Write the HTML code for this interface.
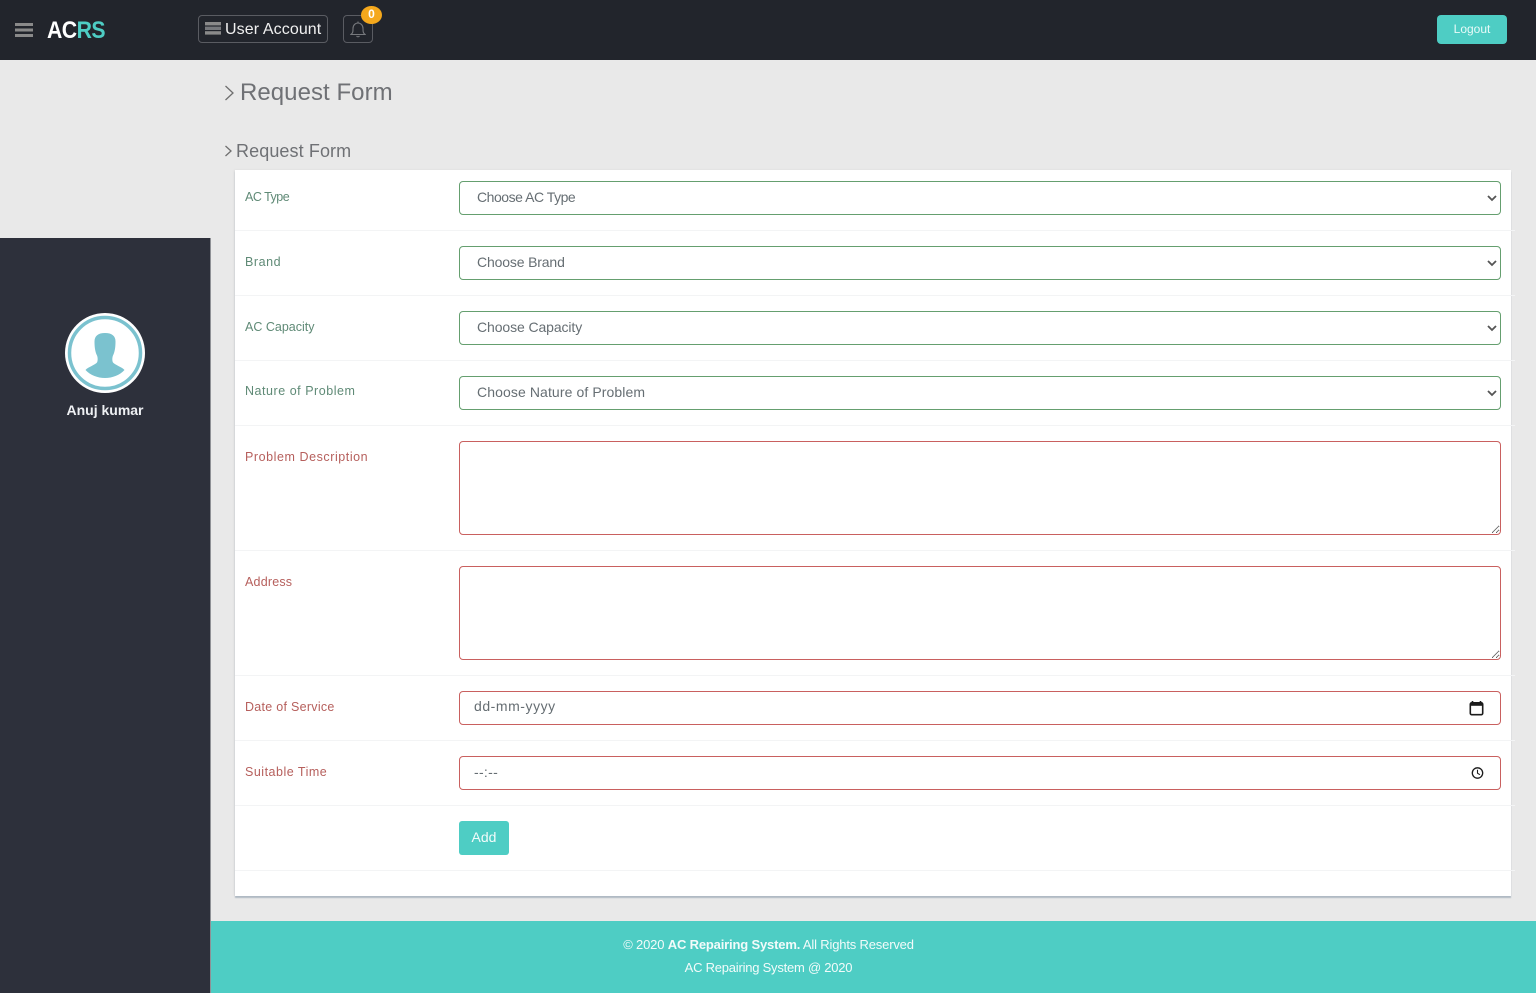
<!DOCTYPE html>
<html lang="en"><head><meta charset="utf-8"><title>Request Form</title>
<style>
*{box-sizing:border-box}
html,body{margin:0;padding:0}
body{width:1536px;height:993px;position:relative;overflow:hidden;background:#e9e9e9;font-family:"Liberation Sans",sans-serif}
.a{position:absolute;white-space:nowrap}
.hdr{left:0;top:0;width:1536px;height:60px;background:#22252c}
.side{left:0;top:238px;width:211px;height:755px;background:#2d303b;border-right:1px solid #8f9196}
.foot{left:211px;top:921px;width:1325px;height:72px;background:#4ecdc4}
.panel{left:235px;top:170px;width:1276px;height:726px;background:#fff;box-shadow:0 2px 1px #b0bac4,-1px 0 2px rgba(0,0,0,.06)}
.hr{left:235px;width:1280px;height:1px;background:#f3f4f5}
.l{left:245px;font-size:12.5px;line-height:16px}
.g{color:#5f8a76}.r{color:#b65f5c}
select,textarea,.in{position:absolute;left:459px;width:1042px;margin:0;border-radius:4px;background:#fff;font-family:"Liberation Sans",sans-serif;color:#666e73;outline:0}
select{height:34px;border:1px solid #659f6f;font-size:14px;padding:0 13px 2px 17px;appearance:none;-webkit-appearance:none}
textarea{height:94px;border:1px solid #c9605f;display:block;resize:vertical}
.in{height:34px;border:1px solid #c9605f;font-size:14px;line-height:30px;padding:0 14px}
.ch{left:1487px}
</style></head><body>
<div class="a hdr"></div>
<svg class="a" style="left:15px;top:23px" width="18" height="14"><rect width="18" height="3" fill="#8a8a8a"/><rect y="5.500" width="18" height="3" fill="#8a8a8a"/><rect y="11" width="18" height="3" fill="#8a8a8a"/></svg>
<div class="a" style="left:47px;top:16px;font-size:24px;line-height:30px;font-weight:700;color:#fff;letter-spacing:-.6px;transform:scaleX(.885);transform-origin:0 0">AC<span style="color:#4ecdc4">RS</span></div>
<div class="a" style="left:198px;top:15px;width:130px;height:28px;border:1px solid #5a5c62;border-radius:4px"></div>
<svg class="a" style="left:205px;top:22px" width="16" height="13"><rect width="16" height="3.400" fill="#8a8a8a"/><rect y="4.600" width="16" height="3.400" fill="#77797d"/><rect y="9.200" width="16" height="3.400" fill="#8a8a8a"/></svg>
<div class="a" style="left:225px;top:21px;font-size:16px;line-height:18px;color:#f0f0f0;letter-spacing:.1px">User Account</div>
<div class="a" style="left:343px;top:15px;width:30px;height:28px;border:1px solid #5a5c62;border-radius:4px"></div>
<svg class="a" style="left:350px;top:21px" width="16" height="17" viewBox="0 0 16 17" fill="none" stroke="#77797d" stroke-width="1.100"><path d="M1 13.500c2-1.500 2-3 2-6 0-3 2-5.500 5-5.500s5 2.500 5 5.500c0 3 0 4.500 2 6z"/><path d="M6.500 15a1.800 1.800 0 0 0 3 0"/><path d="M8 .5v1.500"/></svg>
<div class="a" style="left:361px;top:6px;width:21px;height:18px;border-radius:50%;background:#f5a81c;color:#fff;font-size:12px;font-weight:700;line-height:17px;text-align:center">0</div>
<div class="a" style="left:1437px;top:15px;width:70px;height:29px;background:#4ecdc4;border-radius:4px;color:#e8faf8;font-size:12px;line-height:28px;text-align:center">Logout</div>

<div class="a side"></div>
<svg class="a" style="left:65px;top:313px" width="80" height="80" viewBox="0 0 80 80"><circle cx="40" cy="40" r="40" fill="#fff"/><circle cx="40" cy="40" r="35.500" fill="none" stroke="#7bc2cf" stroke-width="3.500"/><path d="M40 20c-7 0-10.500 3-10.500 8.500 0 5 .5 10 2.500 14 .8 2 1 5 0 7-2 2.500-9 4.500-11.500 7.500 4.500 5 12 8 19.500 8s15-3 19.500-8c-2.500-3-9.500-5-11.500-7.500-1-2-.8-5 0-7 2-4 2.500-9 2.500-14C50.500 23 47 20 40 20z" fill="#7bc2cf"/></svg>
<div class="a" style="left:0;top:402px;width:210px;text-align:center;color:#eef0f3;font-size:14px;font-weight:700;line-height:17px">Anuj kumar</div>

<svg class="a" style="left:224px;top:85px" width="11" height="16" fill="none" stroke="#6f6f6f" stroke-width="1.300"><path d="M1.500 1l7.500 7-7.500 7"/></svg>
<div class="a" style="left:240px;top:78px;font-size:24px;line-height:29px;color:#6f7175;letter-spacing:.05px">Request Form</div>
<svg class="a" style="left:224px;top:145px" width="9" height="12" fill="none" stroke="#6f6f6f" stroke-width="1.300"><path d="M1.500 1l5.500 5-5.500 5"/></svg>
<div class="a" style="left:236px;top:140px;font-size:18px;line-height:22px;color:#6f7175;letter-spacing:.1px">Request Form</div>

<div class="a panel"></div>
<div class="a hr" style="top:230px"></div>
<div class="a hr" style="top:295px"></div>
<div class="a hr" style="top:360px"></div>
<div class="a hr" style="top:425px"></div>
<div class="a hr" style="top:550px"></div>
<div class="a hr" style="top:675px"></div>
<div class="a hr" style="top:740px"></div>
<div class="a hr" style="top:805px"></div>
<div class="a hr" style="top:870px"></div>

<div class="a l g" style="top:189px;letter-spacing:-.5px">AC Type</div>
<select style="top:181px;letter-spacing:-.47px"><option>Choose AC Type</option></select>
<svg class="a ch" style="top:195px" width="10" height="7" fill="none" stroke="#555" stroke-width="1.800"><path d="M1 1l4 4 4-4"/></svg>
<div class="a l g" style="top:254px;letter-spacing:.55px">Brand</div>
<select style="top:246px;letter-spacing:-.15px"><option>Choose Brand</option></select>
<svg class="a ch" style="top:260px" width="10" height="7" fill="none" stroke="#555" stroke-width="1.800"><path d="M1 1l4 4 4-4"/></svg>
<div class="a l g" style="top:319px;letter-spacing:0">AC Capacity</div>
<select style="top:311px;letter-spacing:-.1px"><option>Choose Capacity</option></select>
<svg class="a ch" style="top:325px" width="10" height="7" fill="none" stroke="#555" stroke-width="1.800"><path d="M1 1l4 4 4-4"/></svg>
<div class="a l g" style="top:383px;letter-spacing:.53px">Nature of Problem</div>
<select style="top:376px;letter-spacing:.1px"><option>Choose Nature of Problem</option></select>
<svg class="a ch" style="top:390px" width="10" height="7" fill="none" stroke="#555" stroke-width="1.800"><path d="M1 1l4 4 4-4"/></svg>
<div class="a l r" style="top:449px;letter-spacing:.56px">Problem Description</div>
<textarea style="top:441px"></textarea>
<div class="a l r" style="top:574px;letter-spacing:.2px">Address</div>
<textarea style="top:566px"></textarea>
<div class="a l r" style="top:699px;letter-spacing:.28px">Date of Service</div>
<div class="in" style="top:691px;letter-spacing:.55px;line-height:29px">dd-mm-yyyy</div>
<svg class="a" style="left:1469px;top:700px" width="15" height="16" viewBox="0 0 15 16" fill="none"><path d="M3.500 1v2.500M11.500 1v2.500" stroke="#1c1c1c" stroke-width="1.600"/><rect x="1.300" y="2.800" width="12.400" height="11.900" rx="1.500" stroke="#1c1c1c" stroke-width="1.600"/><rect x="1.300" y="2.800" width="12.400" height="3" fill="#1c1c1c"/></svg>
<div class="a l r" style="top:764px;letter-spacing:.5px">Suitable Time</div>
<div class="in" style="top:756px;letter-spacing:.3px">--:--</div>
<svg class="a" style="left:1471px;top:766px" width="13" height="14" viewBox="0 0 13 14" fill="none" stroke="#1c1c1c"><circle cx="6.500" cy="7" r="5.200" stroke-width="1.300"/><path d="M6.500 3.800V7.200l2.400 1.500" stroke-width="1.100"/></svg>
<div class="a" style="left:459px;top:821px;width:50px;height:34px;background:#4ecdc4;border-radius:3px;color:#f2fbfa;font-size:14px;line-height:33px;text-align:center">Add</div>

<div class="a foot"></div>
<div class="a" style="left:211px;top:937px;width:1115px;text-align:center;color:#f2fbfa;font-size:13px;line-height:16px;letter-spacing:-.17px">© 2020 <b>AC Repairing System.</b> All Rights Reserved</div>
<div class="a" style="left:211px;top:960px;width:1115px;text-align:center;color:#f2fbfa;font-size:13px;line-height:16px;letter-spacing:-.23px">AC Repairing System @ 2020</div>
</body></html>
